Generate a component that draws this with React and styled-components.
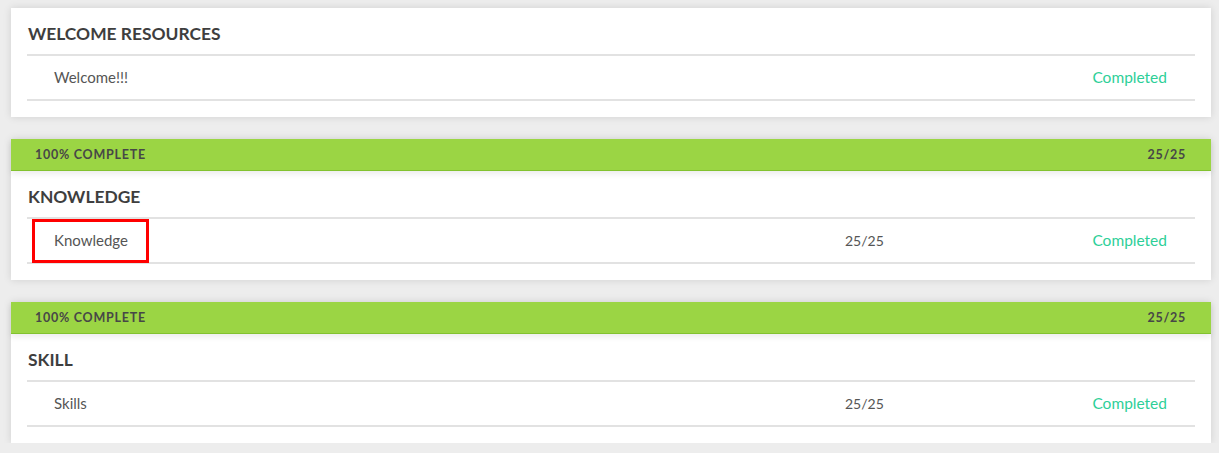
import React from "react";
import styled, { createGlobalStyle } from "styled-components";

const Global = createGlobalStyle`
  html, body { margin: 0; padding: 0; background: #ededed; }
  body { font-family: Lato, "Open Sans", sans-serif; }
`;

const Page = styled.div`
  padding: 8px 8px 0 11px;
  display: flex;
  flex-direction: column;
  gap: 22px;
`;

const Card = styled.section`
  background: #fff;
  box-shadow: 0 0 8px rgba(0, 0, 0, 0.12);
  padding-bottom: 16px;
`;

const ProgressBar = styled.div`
  height: 31px;
  background: #9bd544;
  border-bottom: 1px solid #82c22f;
  box-shadow: 0 3px 6px rgba(0, 0, 0, 0.08);
  display: flex;
  align-items: center;
  justify-content: space-between;
  padding: 0 25px 0 24px;
  font-family: Lato, sans-serif;
  font-weight: 700;
  font-size: 12.5px;
  letter-spacing: 0.75px;
  color: #474747;
`;

const Body = styled.div`
  padding: 0 16px;
`;

const Title = styled.h2`
  margin: 0;
  height: 42px;
  display: flex;
  align-items: center;
  padding-left: 1px;
  padding-top: 4px;
  border-bottom: 2px solid #e2e2e2;
  font-family: Lato, sans-serif;
  font-weight: 700;
  font-size: 17.4px;
  color: #3e3e3e;
`;

const Row = styled.div`
  position: relative;
  height: 45px;
  padding-bottom: 1px;
  box-sizing: border-box;
  display: grid;
  grid-template-columns: 818px 1fr auto;
  align-items: center;
  border-bottom: 2px solid #e2e2e2;
  font-size: 15px;
  color: #555;
`;

const Name = styled.span`
  padding-left: 27px;
`;

const Score = styled.span`
  font-size: 14px;
  color: #555;
`;

const Status = styled.span`
  color: #2dcf98;
  text-align: right;
  padding-right: 28px;
  font-size: 15.5px;
  grid-column: 3;
`;

const Highlight = styled.div`
  position: absolute;
  left: 5px;
  top: 0;
  width: 111px;
  height: 38px;
  border: 3px solid #ff0000;
`;

const sections = [
  {
    title: "WELCOME RESOURCES",
    items: [{ name: "Welcome!!!", status: "Completed" }],
  },
  {
    progress: "100% COMPLETE",
    total: "25/25",
    title: "KNOWLEDGE",
    items: [{ name: "Knowledge", score: "25/25", status: "Completed", highlight: true }],
  },
  {
    progress: "100% COMPLETE",
    total: "25/25",
    title: "SKILL",
    items: [{ name: "Skills", score: "25/25", status: "Completed" }],
  },
];

export default function App() {
  return (
    <>
      <Global />
      <Page>
        {sections.map((s) => (
          <Card key={s.title}>
            {s.progress && (
              <ProgressBar>
                <span>{s.progress}</span>
                <span>{s.total}</span>
              </ProgressBar>
            )}
            <Body>
              <Title>{s.title}</Title>
              {s.items.map((it) => (
                <Row key={it.name}>
                  <Name>{it.name}</Name>
                  {it.score && <Score>{it.score}</Score>}
                  <Status>{it.status}</Status>
                  {it.highlight && <Highlight />}
                </Row>
              ))}
            </Body>
          </Card>
        ))}
      </Page>
    </>
  );
}
